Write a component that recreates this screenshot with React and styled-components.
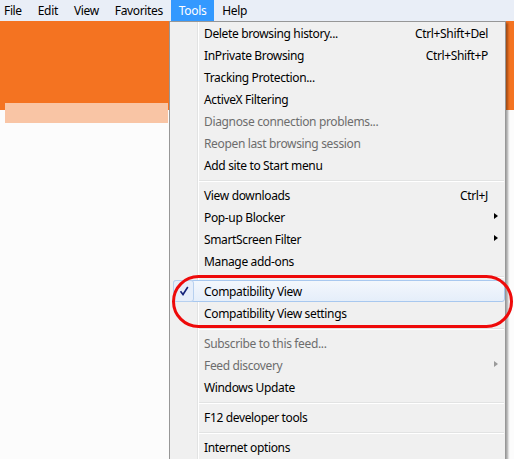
import React from "react";
import styled, { createGlobalStyle } from "styled-components";

const Global = createGlobalStyle`
  html, body { margin: 0; padding: 0; }
  body {
    width: 514px; height: 459px; overflow: hidden;
    background: #fcfcfc;
    font-family: "Noto Sans", "Open Sans", sans-serif;
    font-size: 12px;
    letter-spacing: -0.35px;
  }
`;

const Page = styled.div`
  position: relative;
  width: 514px;
  height: 459px;
  display: flex;
  flex-direction: column;
  overflow: hidden;
`;

const MenuBar = styled.div`
  height: 21px;
  background: #e9eef7;
  display: flex;
  align-items: stretch;
`;

const BarItem = styled.div`
  display: flex;
  align-items: center;
  padding: 0 8px;
  color: ${(p) => (p.$active ? "#fff" : "#000")};
  background: ${(p) => (p.$active ? "#3399ff" : "transparent")};
  &:first-child { padding-left: 4px; }
`;

const Content = styled.div`
  flex: 1;
  display: flex;
  flex-direction: column;
  background: linear-gradient(#f47321 0 89px, #fcfcfc 89px);
  padding: 82px 0 0 5px;
`;

const PeachBar = styled.div`
  width: 163px;
  height: 20px;
  background: #f9c5a5;
`;

const Dropdown = styled.div`
  position: absolute;
  left: 169px;
  top: 21px;
  width: 335px;
  height: 450px;
  border: 1px solid #979797;
  box-shadow: 2px 2px 2px rgba(0, 0, 0, 0.35);
  background: linear-gradient(
    to right,
    #f0f0f0 0 27px,
    #e2e3e3 27px 28px,
    #ffffff 28px 29px,
    #f0f0f0 29px
  );
  display: flex;
  flex-direction: column;
`;

const Item = styled.div`
  position: relative;
  height: 22px;
  flex: none;
  display: flex;
  align-items: center;
  padding: 0 17px 0 34px;
  color: ${(p) => (p.$disabled ? "#6d6d6d" : "#000")};
  white-space: nowrap;
`;

const Highlight = styled(Item)`
  margin-left: 3px;
  padding-left: 30px;
  box-sizing: border-box;
  height: 22px;
  border: 1px solid #a8c8ef;
  border-radius: 3px;
  background: linear-gradient(#f3f7fc, #e5eefa);
`;

const CheckBox = styled.div`
  position: absolute;
  left: -1px;
  top: -1px;
  width: 21px;
  height: 22px;
  box-sizing: border-box;
  border: 1px solid #b7d0ef;
  border-radius: 3px;
  background: #e6eefa;
  display: flex;
  align-items: center;
  justify-content: center;
`;

const Label = styled.span`
  flex: 1;
`;

const Shortcut = styled.span`
  text-align: right;
`;

const Arrow = styled.span`
  position: absolute;
  right: 7px;
  top: 7px;
  width: 0;
  height: 0;
  border-top: 3.5px solid transparent;
  border-bottom: 3.5px solid transparent;
  border-left: 4px solid ${(p) => (p.$disabled ? "#9a9a9a" : "#000")};
`;

const Separator = styled.div`
  flex: none;
  height: 8px;
  margin-left: 29px;
  margin-right: 1px;
  position: relative;
  &::before {
    content: "";
    position: absolute;
    left: 0; right: 0; top: 4px;
    height: 1px;
    background: #e2e3e3;
    box-shadow: 0 1px 0 #ffffff;
  }
`;

const Annotation = styled.div`
  position: absolute;
  left: 172px;
  top: 275px;
  width: 341px;
  height: 53px;
  box-sizing: border-box;
  border: 3px solid #ee0a0a;
  border-radius: 27px;
  pointer-events: none;
`;

const groups = [
  [
    { label: "Delete browsing history...", sc: "Ctrl+Shift+Del" },
    { label: "InPrivate Browsing", sc: "Ctrl+Shift+P" },
    { label: "Tracking Protection..." },
    { label: "ActiveX Filtering" },
    { label: "Diagnose connection problems...", disabled: true },
    { label: "Reopen last browsing session", disabled: true },
    { label: "Add site to Start menu" },
  ],
  [
    { label: "View downloads", sc: "Ctrl+J" },
    { label: "Pop-up Blocker", sub: true },
    { label: "SmartScreen Filter", sub: true },
    { label: "Manage add-ons" },
  ],
  [
    { label: "Compatibility View", checked: true },
    { label: "Compatibility View settings" },
  ],
  [
    { label: "Subscribe to this feed...", disabled: true },
    { label: "Feed discovery", disabled: true, sub: true },
    { label: "Windows Update" },
  ],
  [{ label: "F12 developer tools" }],
  [{ label: "Internet options" }],
];

function MenuRow({ it }) {
  if (it.checked) {
    return (
      <Highlight>
        <CheckBox>
          <svg width="10" height="10" viewBox="0 0 10 10">
            <path d="M1.5 5.2 L4 8.5 L8.8 1" fill="none" stroke="#14237a" strokeWidth="1.6" />
          </svg>
        </CheckBox>
        <Label>{it.label}</Label>
      </Highlight>
    );
  }
  return (
    <Item $disabled={it.disabled}>
      <Label>{it.label}</Label>
      {it.sc && <Shortcut>{it.sc}</Shortcut>}
      {it.sub && <Arrow $disabled={it.disabled} />}
    </Item>
  );
}

export default function App() {
  return (
    <>
      <Global />
      <Page>
        <MenuBar>
          <BarItem>File</BarItem>
          <BarItem>Edit</BarItem>
          <BarItem>View</BarItem>
          <BarItem>Favorites</BarItem>
          <BarItem $active>Tools</BarItem>
          <BarItem>Help</BarItem>
        </MenuBar>
        <Content>
          <PeachBar />
        </Content>
        <Dropdown>
          {groups.map((g, gi) => (
            <React.Fragment key={gi}>
              {gi > 0 && <Separator />}
              {g.map((it) => (
                <MenuRow key={it.label} it={it} />
              ))}
            </React.Fragment>
          ))}
        </Dropdown>
        <Annotation />
      </Page>
    </>
  );
}
